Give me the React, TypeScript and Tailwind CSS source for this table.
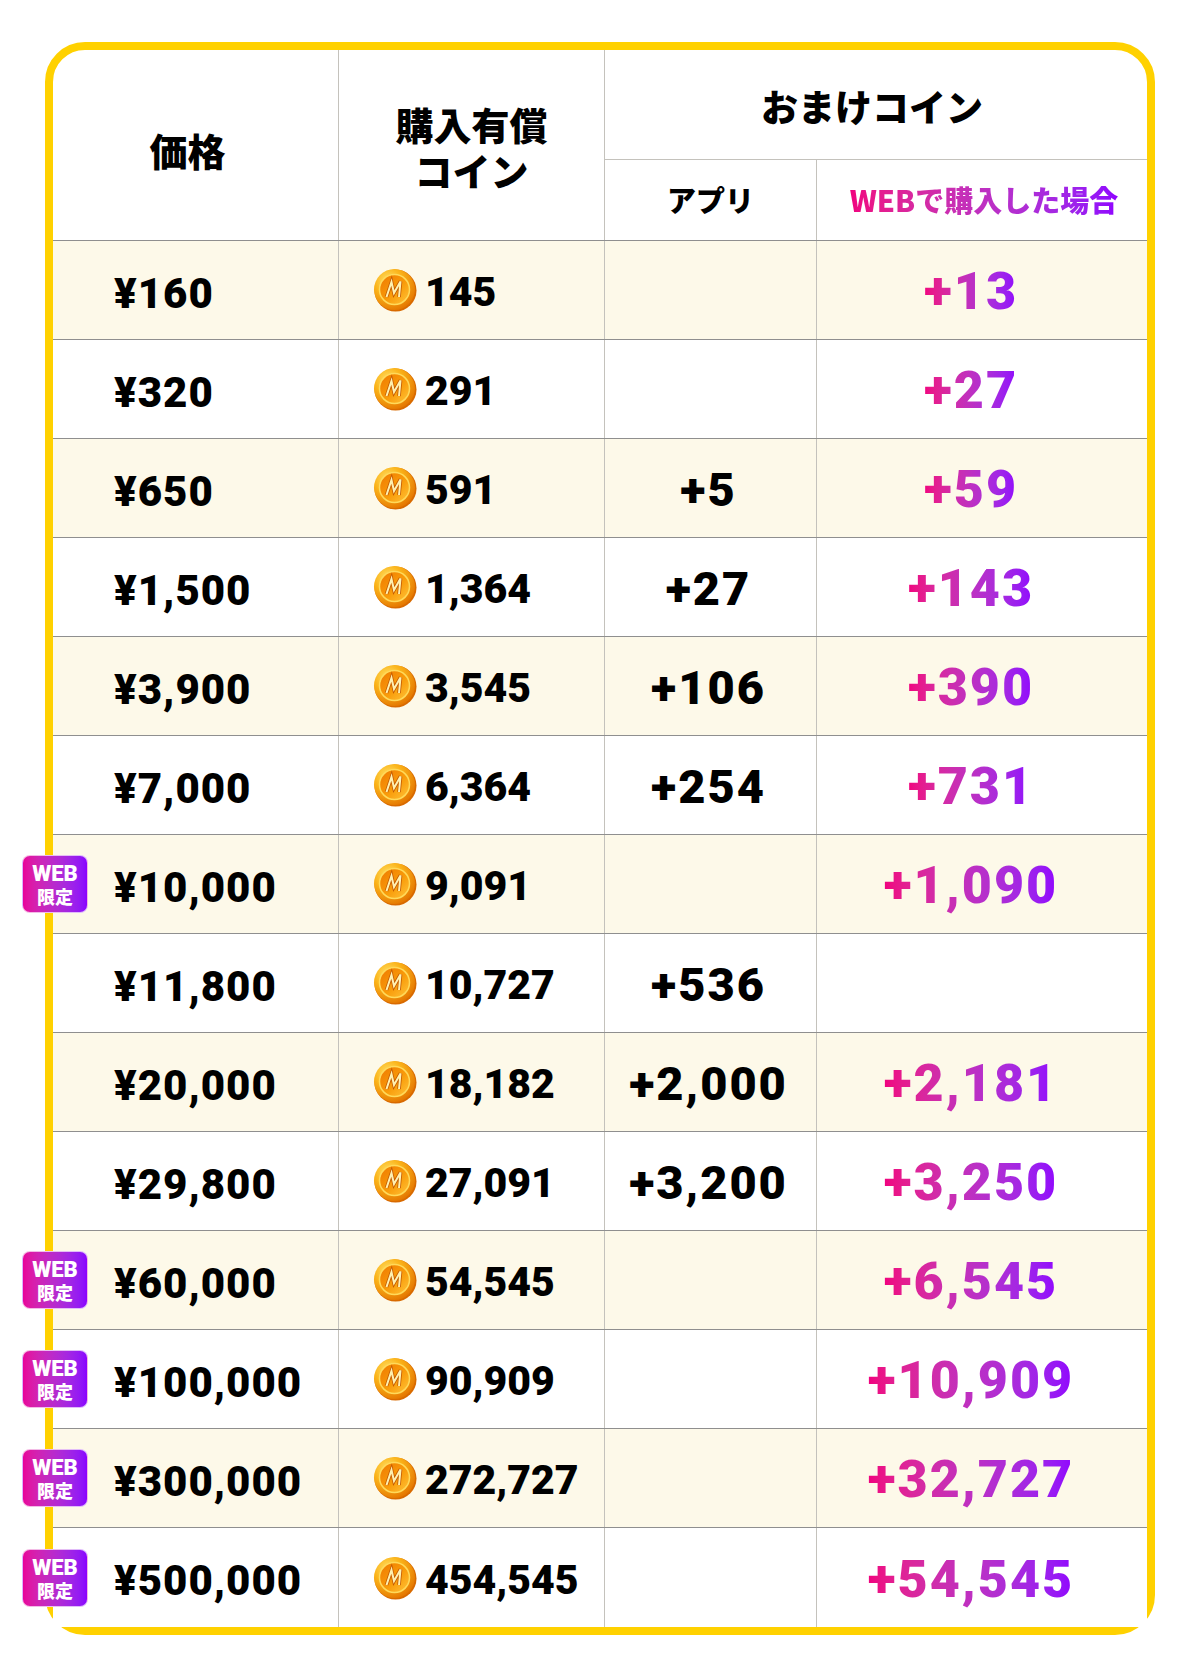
const rows = [
  { price: "¥160", coin: "145", app: "", web: "+13", limited: false },
  { price: "¥320", coin: "291", app: "", web: "+27", limited: false },
  { price: "¥650", coin: "591", app: "+5", web: "+59", limited: false },
  { price: "¥1,500", coin: "1,364", app: "+27", web: "+143", limited: false },
  { price: "¥3,900", coin: "3,545", app: "+106", web: "+390", limited: false },
  { price: "¥7,000", coin: "6,364", app: "+254", web: "+731", limited: false },
  { price: "¥10,000", coin: "9,091", app: "", web: "+1,090", limited: true },
  { price: "¥11,800", coin: "10,727", app: "+536", web: "", limited: false },
  { price: "¥20,000", coin: "18,182", app: "+2,000", web: "+2,181", limited: false },
  { price: "¥29,800", coin: "27,091", app: "+3,200", web: "+3,250", limited: false },
  { price: "¥60,000", coin: "54,545", app: "", web: "+6,545", limited: true },
  { price: "¥100,000", coin: "90,909", app: "", web: "+10,909", limited: true },
  { price: "¥300,000", coin: "272,727", app: "", web: "+32,727", limited: true },
  { price: "¥500,000", coin: "454,545", app: "", web: "+54,545", limited: true },
]

// gold "M" coin
function Coin() {
  return (
    <svg width="44" height="44" viewBox="0 0 44 44" className="shrink-0">
      <defs>
        <radialGradient id="coinOuter" cx="35%" cy="30%" r="75%">
          <stop offset="0%" stopColor="#ffe36b" />
          <stop offset="45%" stopColor="#fbb41a" />
          <stop offset="100%" stopColor="#e47600" />
        </radialGradient>
        <linearGradient id="coinInner" x1="0" y1="0" x2="1" y2="1">
          <stop offset="0%" stopColor="#ee7800" />
          <stop offset="55%" stopColor="#f99c0a" />
          <stop offset="100%" stopColor="#ffc43a" />
        </linearGradient>
      </defs>
      <circle cx="22.5" cy="22.5" r="21" fill="#d86a00" />
      <circle cx="21.5" cy="21.5" r="20.5" fill="url(#coinOuter)" />
      <circle cx="21.5" cy="21.5" r="15" fill="url(#coinInner)" stroke="#ffd95a" strokeWidth="1.5" />
      <path d="M13.5 29 L18.5 14 L21 25 L27.5 13.5 L26 29" fill="none" stroke="#c45a00" strokeWidth="3.6" strokeLinejoin="miter" />
      <path d="M13.5 29 L18.5 14 L21 25 L27.5 13.5 L26 29" fill="none" stroke="#fff1b0" strokeWidth="2" strokeLinejoin="miter" />
    </svg>
  )
}

const num = "font-['Roboto','Noto_Sans_CJK_JP',sans-serif] font-black"
const jp = "font-['Noto_Sans_CJK_JP',sans-serif] font-black"
const grad = "bg-gradient-to-r from-[#f0007f] to-[#9000ff] bg-clip-text text-transparent"

export default function App() {
  return (
    <div className="min-h-[1679px] bg-white pt-[42px] text-black">
      <div className="mx-auto w-[1110px] rounded-[40px] border-[8px] border-[#ffd100] bg-white">
        {/* header */}
        <div className="flex h-[191px] border-b border-[#8f8f8f]">
          <div className={`flex w-[286px] items-center justify-center border-r border-[#c4c2bc] pr-4 pt-2 text-[38px] ${jp}`}>
            価格
          </div>
          <div className={`flex w-[266px] flex-col items-center justify-center border-r border-[#c4c2bc] pt-1 text-[38px] leading-[46px] ${jp}`}>
            <span>購入有償</span>
            <span>コイン</span>
          </div>
          <div className="flex flex-1 flex-col">
            <div className={`flex h-[110px] items-center justify-center border-b border-[#c4c2bc] pr-2 pt-1 text-[37px] ${jp}`}>
              おまけコイン
            </div>
            <div className="flex flex-1">
              <div className={`flex w-[212px] items-center justify-center border-r border-[#c4c2bc] text-[29px] ${jp}`}>
                アプリ
              </div>
              <div className={`flex flex-1 items-center justify-center pl-1 text-[29px] ${jp}`}>
                <span className={grad}>WEBで購入した場合</span>
              </div>
            </div>
          </div>
        </div>

        {rows.map((row, index) => (
          <div
            key={index}
            className={`relative flex h-[99px] ${index % 2 === 0 ? "bg-[#fdf9e9]" : "bg-white"} ${index < rows.length - 1 ? "border-b border-[#8f8f8f]" : ""}`}
          >
            {row.limited && (
              <div className={`absolute left-[-31px] top-1/2 flex h-[58px] w-[66px] -translate-y-1/2 flex-col items-center justify-center gap-[2px] rounded-[8px] border border-white/70 bg-gradient-to-r from-[#e8009a] to-[#8a00ff] text-white ${jp}`}>
                <span className="font-['Roboto',sans-serif] text-[22px] font-black leading-none">WEB</span>
                <span className="text-[18px] leading-none">限定</span>
              </div>
            )}
            <div className={`flex w-[286px] items-center border-r border-[#c4c2bc] pl-[61px] pt-[6px] text-[42px] tracking-[1px] ${num}`}>
              {row.price}
            </div>
            <div className="flex w-[266px] items-center gap-[8px] border-r border-[#c4c2bc] pl-[34px]">
              <Coin />
              <span className={`pt-[6px] text-[41px] ${num}`}>{row.coin}</span>
            </div>
            <div className={`flex w-[212px] items-center justify-center border-r border-[#c4c2bc] pr-1 pt-[4px] text-[47px] tracking-[2px] ${num}`}>
              {row.app}
            </div>
            <div className={`flex flex-1 items-center justify-center pr-[22px] pt-[4px] text-[52px] tracking-[2px] ${num}`}>
              <span className={grad}>{row.web}</span>
            </div>
          </div>
        ))}
      </div>
    </div>
  )
}
